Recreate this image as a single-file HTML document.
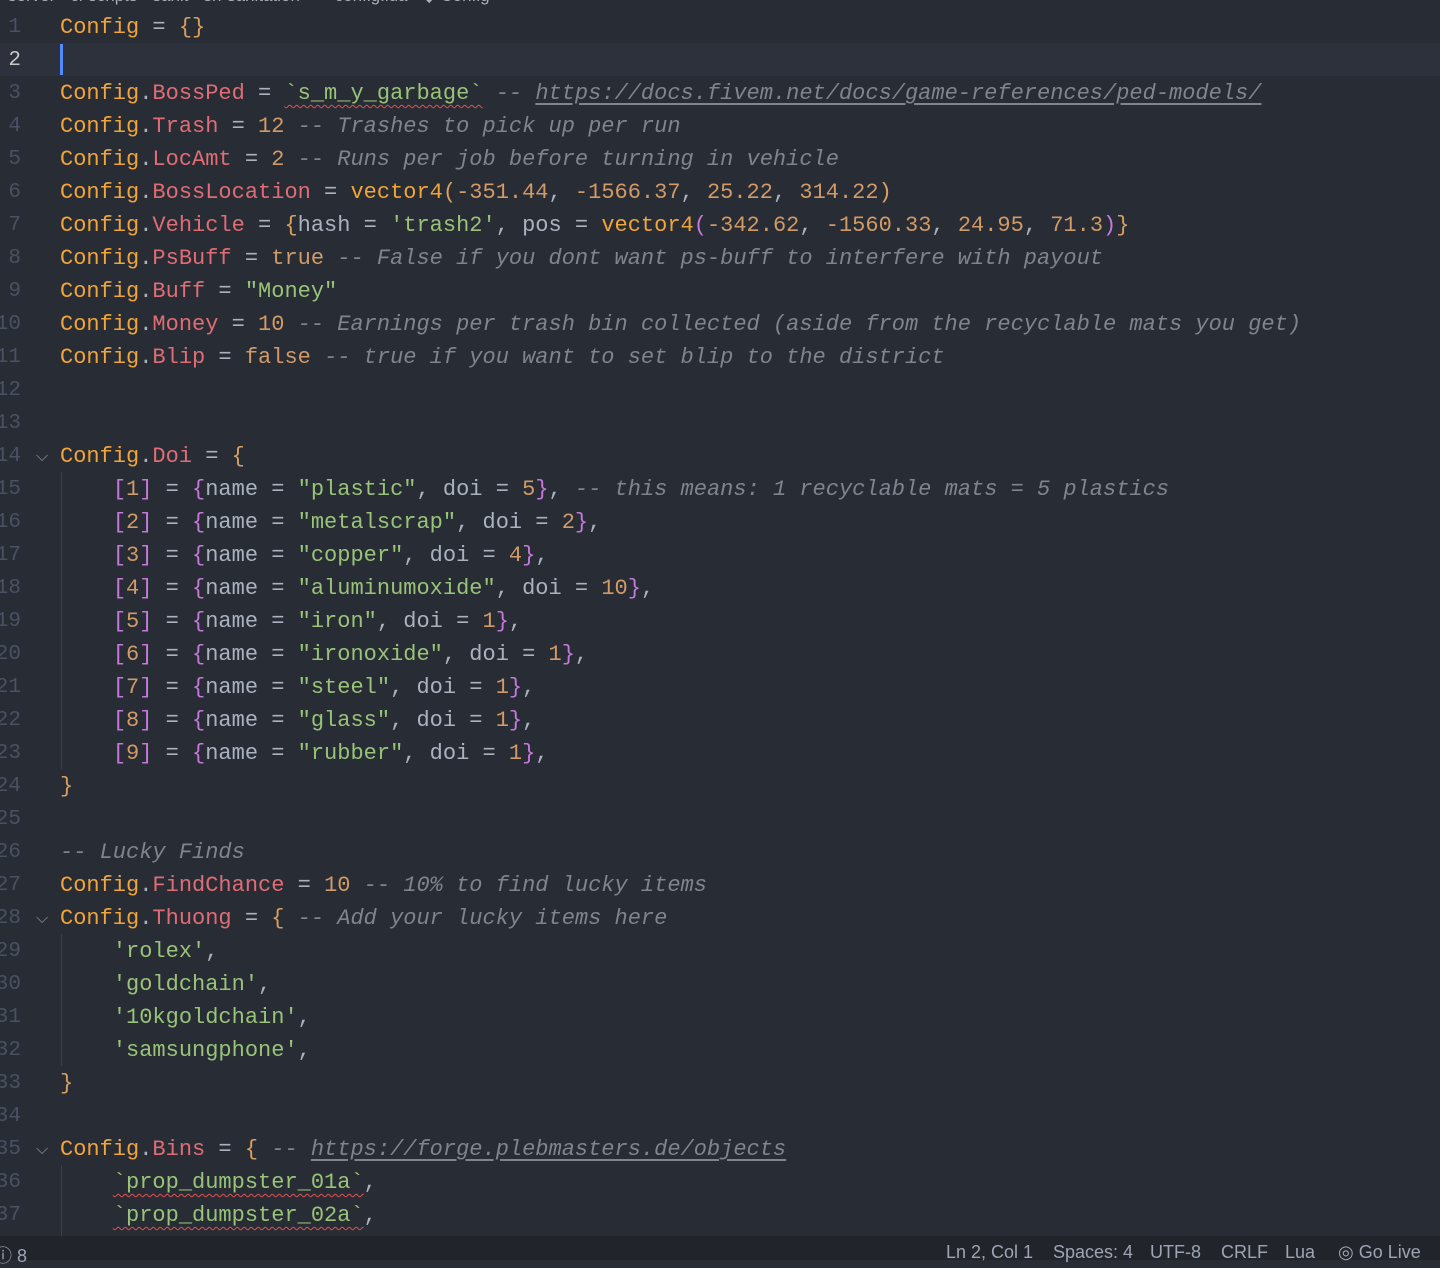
<!DOCTYPE html>
<html><head><meta charset="utf-8"><style>
html,body{margin:0;padding:0;background:#282c34;width:1440px;height:1260px;overflow:hidden}
.crumb{position:absolute;left:8px;top:-14px;font:17px "Liberation Sans",sans-serif;color:#a9afbb;white-space:pre}
.hl{position:absolute;left:0;right:0;top:43px;height:33px;background:#2c313c}
.cur{position:absolute;left:60px;top:44px;width:3px;height:31px;background:#528bff}
.code{position:absolute;left:60px;top:11px;margin:0;font:22px/33px "Liberation Mono",monospace;color:#abb2bf;white-space:pre}
.nums{position:absolute;left:-40px;width:61px;top:11px;margin:0;font:21px/33px "Liberation Mono",monospace;color:#495162;text-align:right;white-space:pre}
.c{color:#f0a43a}.p{color:#e06c75}.n{color:#d19a66}.s{color:#98c379}.m{color:#7f848e;font-style:italic}
.u{text-decoration:underline;text-underline-offset:4px}
.b{color:#d7a060}.v{color:#c678dd}.w{text-decoration:underline wavy #e05252;text-underline-offset:5px;text-decoration-thickness:1px}
.g{position:absolute;left:61px;width:1px;background:#3b4048}
.f{position:absolute;left:36px;color:#8b919c;font:16px "DejaVu Sans",sans-serif}
.status{position:absolute;left:0;right:0;top:1236px;height:24px;background:#21252b;font:18px "Liberation Sans",sans-serif;color:#9da5b4;white-space:pre}
.status span{position:absolute;top:6px}
</style></head><body>
<div class="crumb">server › cl-scripts › sanit › sh-sanitation ›  ● config.lua › ◆ Config</div>
<div class="hl"></div><div class="cur"></div>
<div class="g" style="top:472px;height:297px"></div>
<div class="g" style="top:934px;height:132px"></div>
<div class="g" style="top:1165px;height:71px"></div>
<div class="f" style="top:446px">⌵</div>
<div class="f" style="top:908px">⌵</div>
<div class="f" style="top:1139px">⌵</div>
<pre class="nums">1
<span style="color:#c8c8c8">2</span>
3
4
5
6
7
8
9
10
11
12
13
14
15
16
17
18
19
20
21
22
23
24
25
26
27
28
29
30
31
32
33
34
35
36
37</pre>
<pre class="code"><span class="c">Config</span> = <span class="b">{}</span>

<span class="c">Config</span>.<span class="p">BossPed</span> = <span class="s w">`s_m_y_garbage`</span> <span class="m">-- <span class="u">https://docs.fivem.net/docs/game-references/ped-models/</span></span>
<span class="c">Config</span>.<span class="p">Trash</span> = <span class="n">12</span> <span class="m">-- Trashes to pick up per run</span>
<span class="c">Config</span>.<span class="p">LocAmt</span> = <span class="n">2</span> <span class="m">-- Runs per job before turning in vehicle</span>
<span class="c">Config</span>.<span class="p">BossLocation</span> = <span class="c">vector4</span><span class="b">(</span><span class="n">-351.44</span>, <span class="n">-1566.37</span>, <span class="n">25.22</span>, <span class="n">314.22</span><span class="b">)</span>
<span class="c">Config</span>.<span class="p">Vehicle</span> = <span class="b">{</span>hash = <span class="s">'trash2'</span>, pos = <span class="c">vector4</span><span class="v">(</span><span class="n">-342.62</span>, <span class="n">-1560.33</span>, <span class="n">24.95</span>, <span class="n">71.3</span><span class="v">)</span><span class="b">}</span>
<span class="c">Config</span>.<span class="p">PsBuff</span> = <span class="n">true</span> <span class="m">-- False if you dont want ps-buff to interfere with payout</span>
<span class="c">Config</span>.<span class="p">Buff</span> = <span class="s">"Money"</span>
<span class="c">Config</span>.<span class="p">Money</span> = <span class="n">10</span> <span class="m">-- Earnings per trash bin collected (aside from the recyclable mats you get)</span>
<span class="c">Config</span>.<span class="p">Blip</span> = <span class="n">false</span> <span class="m">-- true if you want to set blip to the district</span>


<span class="c">Config</span>.<span class="p">Doi</span> = <span class="b">{</span>
    <span class="v">[</span><span class="n">1</span><span class="v">]</span> = <span class="v">{</span>name = <span class="s">"plastic"</span>, doi = <span class="n">5</span><span class="v">}</span>, <span class="m">-- this means: 1 recyclable mats = 5 plastics</span>
    <span class="v">[</span><span class="n">2</span><span class="v">]</span> = <span class="v">{</span>name = <span class="s">"metalscrap"</span>, doi = <span class="n">2</span><span class="v">}</span>,
    <span class="v">[</span><span class="n">3</span><span class="v">]</span> = <span class="v">{</span>name = <span class="s">"copper"</span>, doi = <span class="n">4</span><span class="v">}</span>,
    <span class="v">[</span><span class="n">4</span><span class="v">]</span> = <span class="v">{</span>name = <span class="s">"aluminumoxide"</span>, doi = <span class="n">10</span><span class="v">}</span>,
    <span class="v">[</span><span class="n">5</span><span class="v">]</span> = <span class="v">{</span>name = <span class="s">"iron"</span>, doi = <span class="n">1</span><span class="v">}</span>,
    <span class="v">[</span><span class="n">6</span><span class="v">]</span> = <span class="v">{</span>name = <span class="s">"ironoxide"</span>, doi = <span class="n">1</span><span class="v">}</span>,
    <span class="v">[</span><span class="n">7</span><span class="v">]</span> = <span class="v">{</span>name = <span class="s">"steel"</span>, doi = <span class="n">1</span><span class="v">}</span>,
    <span class="v">[</span><span class="n">8</span><span class="v">]</span> = <span class="v">{</span>name = <span class="s">"glass"</span>, doi = <span class="n">1</span><span class="v">}</span>,
    <span class="v">[</span><span class="n">9</span><span class="v">]</span> = <span class="v">{</span>name = <span class="s">"rubber"</span>, doi = <span class="n">1</span><span class="v">}</span>,
<span class="b">}</span>

<span class="m">-- Lucky Finds</span>
<span class="c">Config</span>.<span class="p">FindChance</span> = <span class="n">10</span> <span class="m">-- 10% to find lucky items</span>
<span class="c">Config</span>.<span class="p">Thuong</span> = <span class="b">{</span> <span class="m">-- Add your lucky items here</span>
    <span class="s">'rolex'</span>,
    <span class="s">'goldchain'</span>,
    <span class="s">'10kgoldchain'</span>,
    <span class="s">'samsungphone'</span>,
<span class="b">}</span>

<span class="c">Config</span>.<span class="p">Bins</span> = <span class="b">{</span> <span class="m">-- <span class="u">https://forge.plebmasters.de/objects</span></span>
    <span class="s w">`prop_dumpster_01a`</span>,
    <span class="s w">`prop_dumpster_02a`</span>,</pre>
<div class="status"><span style="left:-6px">ⓘ 8</span><span style="left:946px">Ln 2, Col 1</span><span style="left:1053px">Spaces: 4</span><span style="left:1150px">UTF-8</span><span style="left:1221px">CRLF</span><span style="left:1285px">Lua</span><span style="left:1338px">◎ Go Live</span></div>
</body></html>
